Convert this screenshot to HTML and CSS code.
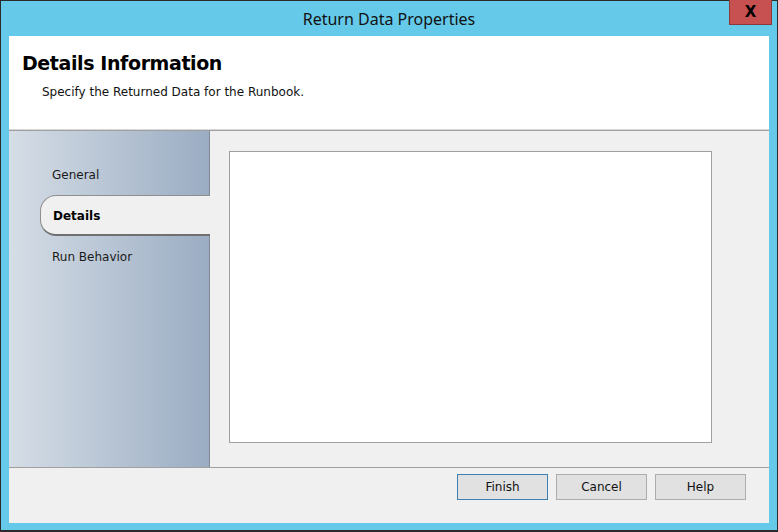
FILE: index.html
```html
<!DOCTYPE html>
<html lang="en">
<head>
    <meta charset="UTF-8">
    <title>Return Data Properties</title>
    <link rel="stylesheet" href="styles.css">
</head>
<body>
    <div class="window">
        <div class="titlebar">
            <span class="title">Return Data Properties</span>
            <div class="close">X</div>
        </div>

        <div class="content">
            <div class="header">
                <h1>Details Information</h1>
                <p>Specify the Returned Data for the Runbook.</p>
            </div>

            <div class="body">
                <div class="sidebar">
                    <div class="nav-item">General</div>
                    <div class="nav-item active">Details</div>
                    <div class="nav-item">Run Behavior</div>
                </div>
                <div class="main">
                    <div class="data-box"></div>
                </div>
            </div>

            <div class="footer">
                <button class="default">Finish</button>
                <button>Cancel</button>
                <button>Help</button>
            </div>
        </div>
    </div>
</body>
</html>
```

FILE: styles.css
```css
body {
    margin: 0;
    font-family: "DejaVu Sans", Tahoma, sans-serif;
    font-size: 12px;
    color: #1a1a1a;
}

.window {
    width: 778px;
    height: 532px;
    box-sizing: border-box;
    background-color: #65c9ea;
    border: 1px solid #2b2b2b;
    border-bottom-width: 2px;
    display: flex;
    flex-direction: column;
}

.titlebar {
    position: relative;
    height: 35px;
    display: flex;
    justify-content: center;
    align-items: center;
}

.title {
    font-family: "Noto Sans", "Open Sans", sans-serif;
    font-size: 16px;
    color: #111;
    margin-top: 1px;
}

.close {
    position: absolute;
    top: -1px;
    right: 5px;
    width: 41px;
    height: 24px;
    background-color: #c75050;
    border: 1px solid #8a3a3a;
    border-top: none;
    color: #000;
    font-family: "DejaVu Sans", sans-serif;
    font-weight: bold;
    font-size: 15px;
    display: flex;
    justify-content: center;
    align-items: center;
}

.content {
    flex: 1;
    margin: 0 8px 7px 8px;
    background-color: #f0f0f0;
    display: flex;
    flex-direction: column;
}

.header {
    height: 94px;
    background-color: white;
    border-bottom: 1px solid #d8d8d8;
    box-sizing: border-box;
    padding: 16px 0 0 13px;
}

.header h1 {
    margin: 0;
    font-size: 19px;
    font-weight: bold;
    color: #000;
    letter-spacing: -0.4px;
}

.header p {
    margin: 11px 0 0 20px;
    font-size: 12px;
    color: #111;
}

.body {
    height: 338px;
    display: flex;
    border-top: 1px solid #a0a0a0;
    border-bottom: 1px solid #a0a0a0;
    box-sizing: border-box;
}

.sidebar {
    width: 201px;
    box-sizing: border-box;
    background: linear-gradient(to right, #d5dde6, #9badc3);
    border-right: 1px solid #808a94;
    padding-top: 23px;
}

.nav-item {
    height: 41px;
    padding-left: 43px;
    display: flex;
    align-items: center;
    box-sizing: border-box;
}

.nav-item.active {
    margin-left: 31px;
    margin-right: -1px;
    padding-left: 12px;
    padding-top: 2px;
    background-color: #f0f0f0;
    font-weight: bold;
    color: #000;
    border: 1px solid #8f8f8f;
    border-right: none;
    border-bottom: 2px solid #707070;
    border-radius: 16px 0 0 16px;
}

.main {
    flex: 1;
    padding: 20px 0 0 19px;
}

.data-box {
    width: 483px;
    height: 292px;
    box-sizing: border-box;
    background-color: white;
    border: 1px solid #a0a0a0;
}

.footer {
    flex: 1;
    display: flex;
    justify-content: flex-end;
    align-items: flex-start;
    gap: 8px;
    padding: 6px 23px 0 0;
}

button {
    width: 91px;
    height: 26px;
    background-color: #e1e1e1;
    border: 1px solid #adadad;
    font-family: "DejaVu Sans", Tahoma, sans-serif;
    font-size: 12px;
    color: #111;
    padding: 0;
}

button.default {
    border-color: #3c7fb1;
}
```
